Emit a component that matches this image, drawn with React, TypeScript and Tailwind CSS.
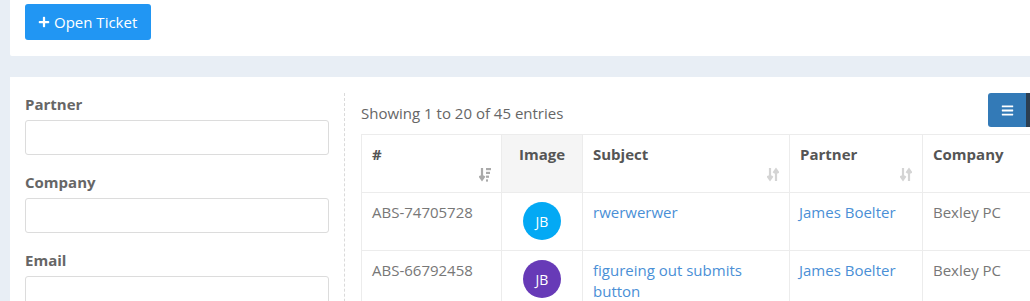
import { FaPlus, FaBars } from 'react-icons/fa';

const font = { fontFamily: '"Open Sans", "Liberation Sans", sans-serif' };

const SortBoth = () => (
  <svg width="12" height="15" viewBox="0 0 12 15" className="text-[#d4d4d4]">
    <path d="M3 1v10M0.5 9l2.5 3.5 2.5-3.5" stroke="currentColor" strokeWidth="2.2" fill="none" />
    <path d="M9 14V4M6.5 6L9 2.5 11.5 6" stroke="currentColor" strokeWidth="2.2" fill="none" />
  </svg>
);

const SortDesc = () => (
  <svg width="12" height="15" viewBox="0 0 12 15" className="text-[#aaa]">
    <path d="M3 1v10M0.5 9l2.5 3.5 2.5-3.5" stroke="currentColor" strokeWidth="2.2" fill="none" />
    <rect x="7" y="1" width="5" height="2.2" fill="currentColor" />
    <rect x="7" y="4.8" width="4" height="2.2" fill="currentColor" />
    <rect x="7" y="8.6" width="3" height="2.2" fill="currentColor" />
    <rect x="7" y="12.4" width="2" height="2.2" fill="currentColor" />
  </svg>
);

type Row = { id: string; color: string; subject: string };

const rows: Row[] = [
  { id: 'ABS-74705728', color: 'bg-[#03a9f4]', subject: 'rwerwerwer' },
  { id: 'ABS-66792458', color: 'bg-[#673ab7]', subject: 'figureing out submits button' },
];

function Field({ label }: { label: string }) {
  return (
    <div className="mb-[17px]">
      <div className="text-[15px] font-bold text-[#666] leading-[20px] mb-[6px]">{label}</div>
      <div className="h-[35px] rounded-[3px] border border-[#dcdcdc] bg-white" />
    </div>
  );
}

function HeadCell({ label, w, sort, gray }: { label: string; w: string; sort?: 'desc' | 'both'; gray?: boolean }) {
  return (
    <th className={`${w} ${gray ? 'bg-[#f5f5f5] text-center' : 'text-left'} relative border border-[#ececec] h-[58px] align-top px-[10px] pt-[9px] text-[15px] font-bold text-[#555] leading-[20px]`}>
      {label}
      {sort && (
        <span className="absolute right-[10px] bottom-[10px] flex">
          {sort === 'desc' ? <SortDesc /> : <SortBoth />}
        </span>
      )}
    </th>
  );
}

export default function App() {
  return (
    <div className="w-[1030px] h-[301px] overflow-hidden bg-[#e8eef5] pl-[10px] text-[15px]" style={font}>
      <div className="w-[1040px] h-[56px] bg-white pl-[15px] pt-[4px] rounded-bl-[2px]">
        <button className="h-[36px] pl-[13px] pr-[14px] rounded-[3px] bg-[#2196f3] text-white text-[15px] flex items-center gap-[4px]">
          <FaPlus size={12} />
          <span>Open Ticket</span>
        </button>
      </div>
      <div className="mt-[21px] w-[1080px] h-[300px] bg-white flex pt-[16px]">
        <div className="w-[334px] px-[15px] pt-[1px]">
          <Field label="Partner" />
          <Field label="Company" />
          <Field label="Email" />
        </div>
        <div className="w-[738px] border-l border-dashed border-[#dadada] pl-[16px] pr-[16px]">
          <div className="flex items-start h-[41px]">
            <div className="mt-[10px] text-[#666] leading-[20px]">Showing 1 to 20 of 45 entries</div>
            <div className="ml-auto flex">
              <button className="w-[38px] h-[34px] bg-[#337ab7] rounded-l-[3px] text-white flex items-center justify-center">
                <FaBars size={13} />
              </button>
              <button className="w-[40px] h-[34px] bg-[#2c3e50]" />
            </div>
          </div>
          <table className="border-collapse table-fixed w-[705px]">
            <thead>
              <tr>
                <HeadCell label="#" w="w-[140px]" sort="desc" />
                <HeadCell label="Image" w="w-[81px]" gray />
                <HeadCell label="Subject" w="w-[207px]" sort="both" />
                <HeadCell label="Partner" w="w-[133px]" sort="both" />
                <HeadCell label="Company" w="w-[144px]" />
              </tr>
            </thead>
            <tbody>
              {rows.map((r) => (
                <tr key={r.id} className="h-[58px]">
                  <td className="border border-[#ececec] align-top px-[10px] pt-[9px] text-[#777] leading-[21px]">{r.id}</td>
                  <td className="border border-[#ececec] align-top pt-[9px]">
                    <div className={`${r.color} mx-auto w-[38px] h-[38px] rounded-full text-white flex items-center justify-center text-[14px]`}>JB</div>
                  </td>
                  <td className="border border-[#ececec] align-top px-[10px] pt-[9px] text-[#4a8fd6] leading-[21px]">{r.subject}</td>
                  <td className="border border-[#ececec] align-top px-[9px] pt-[9px] text-[#4a8fd6] leading-[21px]">James Boelter</td>
                  <td className="border border-[#ececec] align-top px-[10px] pt-[9px] text-[#777] leading-[21px]">Bexley PC</td>
                </tr>
              ))}
            </tbody>
          </table>
        </div>
      </div>
    </div>
  );
}
